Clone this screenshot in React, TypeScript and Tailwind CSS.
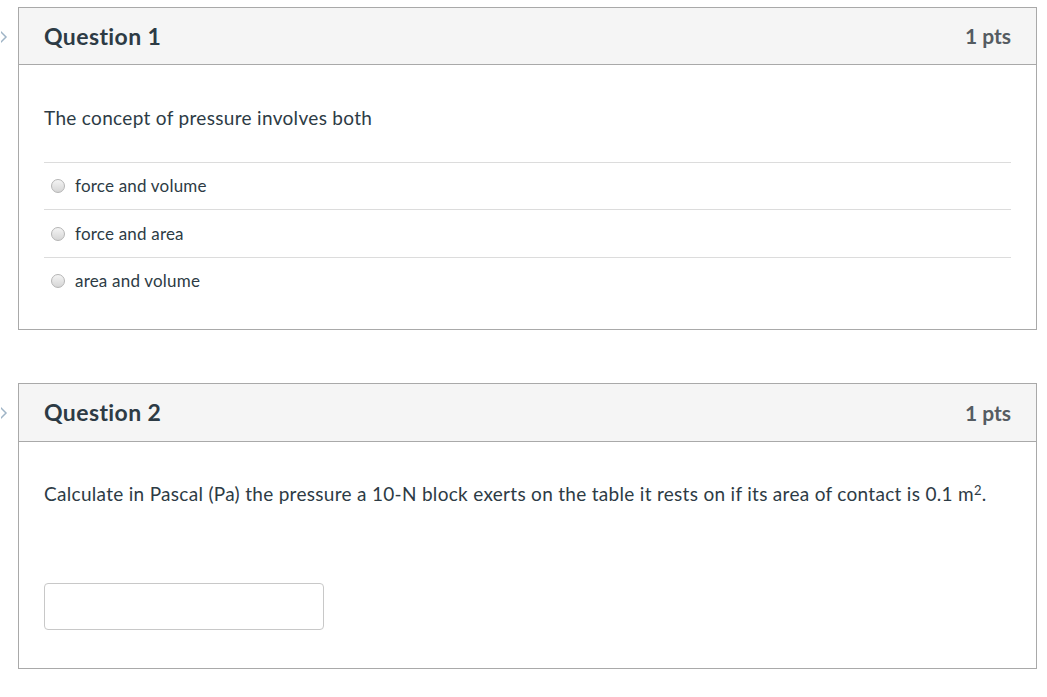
const options = ["force and volume", "force and area", "area and volume"];

function Chevron() {
  return (
    <svg width="8" height="16" viewBox="0 0 8 16" className="absolute left-0 top-1/2 -translate-y-1/2">
      <polyline points="-2,1 5,8 -2,15" fill="none" stroke="#9fb4c6" strokeWidth="1.5" />
    </svg>
  );
}

function Header({ title, tall }: { title: string; tall?: boolean }) {
  return (
    <div className="relative">
      <div className="absolute left-[-18px] top-0 bottom-0 w-[10px]">
        <Chevron />
      </div>
      <div
        className={`flex items-center justify-between border-b border-[#a9a9a9] bg-[#f5f5f5] px-[25px] ${
          tall ? "h-[58px]" : "h-[57px]"
        }`}
      >
        <span className="text-[23px] font-bold tracking-[0.4px] text-[#2d3b45]">{title}</span>
        <span className="text-[21px] font-bold text-[#555c62]">1 pts</span>
      </div>
    </div>
  );
}

function Radio() {
  return (
    <span className="ml-[7px] inline-block h-[14px] w-[14px] shrink-0 rounded-full border border-[#b5b5b5] bg-gradient-to-b from-[#f4f4f4] to-[#d6d6d6]" />
  );
}

export default function App() {
  return (
    <div
      className="min-h-screen bg-white pl-[18px] pr-[10px] pt-[7px] text-[#2d3b45]"
      style={{ fontFamily: "Lato, 'Open Sans', sans-serif" }}
    >
      <div className="border border-[#a9a9a9]">
        <Header title="Question 1" />
        <div className="px-[25px] pt-[39px] pb-[25px]">
          <p className="text-[19px] leading-[27px] tracking-[0.32px]">The concept of pressure involves both</p>
          <div className="mt-[31px]">
            {options.map((o, i) => (
              <div
                key={o}
                className={`flex items-center gap-[10px] border-t border-[#dcdcdc] ${i === 1 ? "h-[48px]" : "h-[47px]"}`}
              >
                <Radio />
                <span className="text-[17px] tracking-[0.2px]">{o}</span>
              </div>
            ))}
          </div>
        </div>
      </div>

      <div className="mt-[53px] border border-[#a9a9a9]">
        <Header title="Question 2" tall />
        <div className="px-[25px] pt-[38px] pb-[38px]">
          <p className="text-[19px] leading-[27px] tracking-[0.3px]">
            Calculate in Pascal (Pa) the pressure a 10-N block exerts on the table it rests on if its area of contact
            is 0.1 m<sup className="text-[13px]">2</sup>.
          </p>
          <input
            type="text"
            className="mt-[76px] block h-[47px] w-[280px] rounded-[4px] border border-[#c8c8c8] bg-white px-2 outline-none"
          />
        </div>
      </div>
    </div>
  );
}
